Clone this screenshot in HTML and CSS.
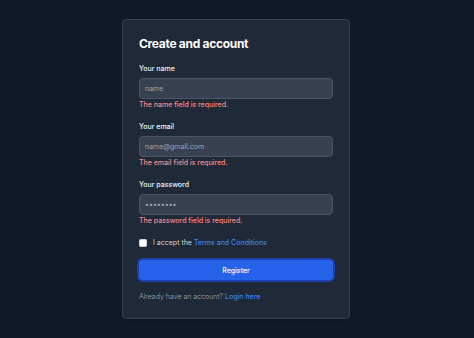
FILE: index.html
```html
<!DOCTYPE html>
<html lang="en">
<head>
<meta charset="utf-8">
<title>Create an account</title>
<link rel="stylesheet" href="styles.css">
</head>
<body>
<main class="page">
  <section class="card">
    <h1 class="title">Create and account</h1>
    <form class="form">
      <div class="field">
        <label class="label" for="name">Your name</label>
        <input class="input" id="name" type="text" placeholder="name">
        <p class="error">The name field is required.</p>
      </div>
      <div class="field">
        <label class="label" for="email">Your email</label>
        <input class="input" id="email" type="email" placeholder="name@gmail.com">
        <p class="error">The email field is required.</p>
      </div>
      <div class="field">
        <label class="label" for="password">Your password</label>
        <input class="input" id="password" type="password" placeholder="••••••••">
        <p class="error">The password field is required.</p>
      </div>
      <div class="terms">
        <span class="check-wrap"><input class="check" type="checkbox" id="terms"></span>
        <label class="terms-text" for="terms">I accept the <a class="link" href="#">Terms and Conditions</a></label>
      </div>
      <button class="button" type="button">Register</button>
      <p class="footer">Already have an account? <a class="link" href="#">Login here</a></p>
    </form>
  </section>
</main>
</body>
</html>
```

FILE: styles.css
```css
html, body {
  margin: 0;
  padding: 0;
  background: #111827;
}
body {
  font-family: Inter, "Noto Sans", "Liberation Sans", sans-serif;
  color: #ffffff;
}
.page {
  display: flex;
  justify-content: center;
  padding: 19px 2px 0 0;
  min-height: 338px;
  box-sizing: border-box;
}
.card {
  width: 228px;
  box-sizing: border-box;
  background: #1f2937;
  border: 1px solid #374151;
  border-radius: 4px;
  padding: 16px;
  box-shadow: 0 1px 2px rgba(0,0,0,0.3);
  align-self: flex-start;
}
.title {
  margin: 0 0 12px;
  font-size: 12px;
  line-height: 16px;
  font-weight: 700;
  letter-spacing: -0.025em;
  color: #ffffff;
}
.form {
  display: flex;
  flex-direction: column;
  gap: 12px;
  margin: 0;
}
.field {
  display: flex;
  flex-direction: column;
}
.label {
  font-size: 7px;
  line-height: 10px;
  font-weight: 500;
  color: #f3f4f6;
  margin-bottom: 4px;
}
.input {
  display: block;
  box-sizing: border-box;
  width: 100%;
  height: 21px;
  margin: 0;
  padding: 0 5px;
  background: #374151;
  border: 1px solid #4b5563;
  border-radius: 4px;
  font-family: inherit;
  font-size: 7px;
  color: #ffffff;
  outline: none;
}
.input::placeholder {
  color: #9ca3af;
}
.error {
  margin: 1px 0 0;
  font-size: 7px;
  line-height: 10px;
  font-weight: 500;
  color: #f98888;
}
.terms {
  display: flex;
  align-items: center;
  height: 10px;
}
.check-wrap {
  display: flex;
  align-items: center;
  height: 10px;
}
.check {
  appearance: none;
  -webkit-appearance: none;
  width: 8px;
  height: 8px;
  margin: 0;
  background: #ffffff;
  border: 1px solid #d1d5db;
  border-radius: 1.5px;
  box-sizing: border-box;
}
.terms-text {
  margin-left: 6px;
  font-size: 7px;
  line-height: 10px;
  font-weight: 400;
  color: #d1d5db;
}
.link {
  color: #3b82f6;
  font-weight: 500;
  text-decoration: none;
}
.button {
  display: block;
  width: 100%;
  height: 20px;
  margin: 0;
  padding: 0;
  border: none;
  border-radius: 4px;
  background: #2563eb;
  box-shadow: 0 0 0 2px #1e40af;
  color: #ffffff;
  font-family: inherit;
  font-size: 7px;
  font-weight: 500;
}
.footer {
  margin: 0;
  font-size: 7px;
  line-height: 10px;
  font-weight: 300;
  color: #9ca3af;
}
```
